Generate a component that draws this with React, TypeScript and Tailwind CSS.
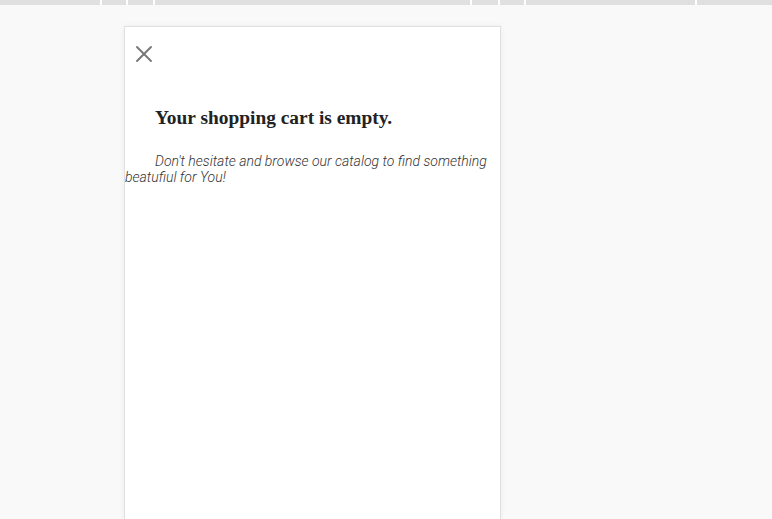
import { X } from "lucide-react";

const segments = [100, 24, 25, 315, 26, 24, 169];

export default function App() {
  return (
    <div className="min-h-[519px] bg-[#f9f9f9] overflow-hidden">
      <div className="flex h-[5px] bg-[#e0e0e0]">
        {segments.map((w, i) => (
          <div key={i} className="h-full border-r-2 border-white shrink-0" style={{ width: w + 2 }} />
        ))}
      </div>
      <aside className="ml-[124px] mt-[21px] w-[377px] h-[493px] bg-white border border-[#e0e0e0] border-b-0 shadow-[0_0_6px_rgba(0,0,0,0.06)]">
        <button className="ml-[5px] mt-[13px] flex h-[28px] w-[28px] items-center justify-center text-[#777]">
          <X size={28} strokeWidth={1.6} />
        </button>
        <h2 className="mt-[38px] pl-[30px] text-[19.4px] font-bold leading-6 text-[#222] [font-family:'Liberation_Serif',serif]">
          Your shopping cart is empty.
        </h2>
        <p className="mt-[23px] indent-[30px] text-[14px] italic font-light leading-4 text-[#333] [font-family:Roboto,sans-serif]">
          Don't hesitate and browse our catalog to find something beatufiul for You!
        </p>
      </aside>
    </div>
  );
}
